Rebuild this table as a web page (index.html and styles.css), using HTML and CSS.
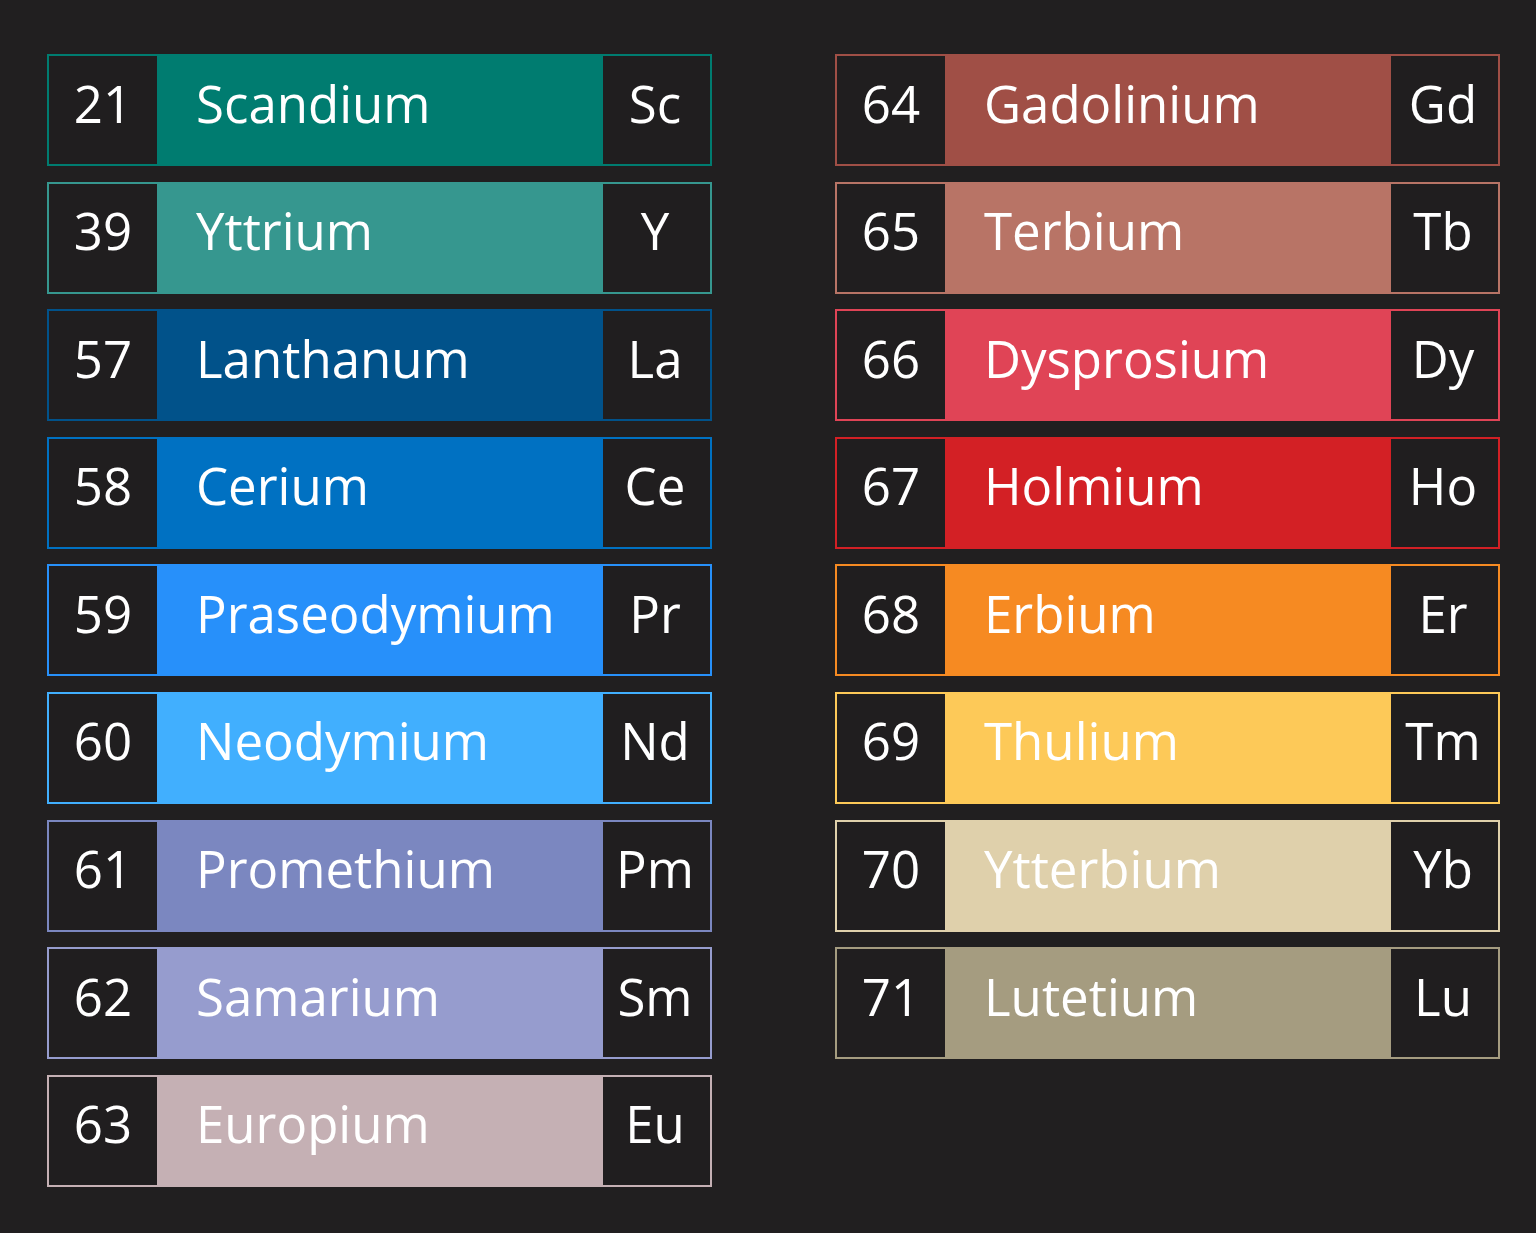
FILE: index.html
```html
<!DOCTYPE html>
<html lang="en">
<head>
<meta charset="utf-8">
<title>Lanthanides</title>
<link rel="stylesheet" href="styles.css">
</head>
<body>
<main class="board">
  <section class="column">
    <div class="card c-sc"><span class="num">21</span><span class="name">Scandium</span><span class="sym">Sc</span></div>
    <div class="card c-y"><span class="num">39</span><span class="name">Yttrium</span><span class="sym">Y</span></div>
    <div class="card c-la"><span class="num">57</span><span class="name">Lanthanum</span><span class="sym">La</span></div>
    <div class="card c-ce"><span class="num">58</span><span class="name">Cerium</span><span class="sym">Ce</span></div>
    <div class="card c-pr"><span class="num">59</span><span class="name">Praseodymium</span><span class="sym">Pr</span></div>
    <div class="card c-nd"><span class="num">60</span><span class="name">Neodymium</span><span class="sym">Nd</span></div>
    <div class="card c-pm"><span class="num">61</span><span class="name">Promethium</span><span class="sym">Pm</span></div>
    <div class="card c-sm"><span class="num">62</span><span class="name">Samarium</span><span class="sym">Sm</span></div>
    <div class="card c-eu"><span class="num">63</span><span class="name">Europium</span><span class="sym">Eu</span></div>
  </section>
  <section class="column">
    <div class="card c-gd"><span class="num">64</span><span class="name">Gadolinium</span><span class="sym">Gd</span></div>
    <div class="card c-tb"><span class="num">65</span><span class="name">Terbium</span><span class="sym">Tb</span></div>
    <div class="card c-dy"><span class="num">66</span><span class="name">Dysprosium</span><span class="sym">Dy</span></div>
    <div class="card c-ho"><span class="num">67</span><span class="name">Holmium</span><span class="sym">Ho</span></div>
    <div class="card c-er"><span class="num">68</span><span class="name">Erbium</span><span class="sym">Er</span></div>
    <div class="card c-tm"><span class="num">69</span><span class="name">Thulium</span><span class="sym">Tm</span></div>
    <div class="card c-yb"><span class="num">70</span><span class="name">Ytterbium</span><span class="sym">Yb</span></div>
    <div class="card c-lu"><span class="num">71</span><span class="name">Lutetium</span><span class="sym">Lu</span></div>
  </section>
</main>
</body>
</html>
```
FILE: styles.css
```css
html, body {
  margin: 0;
  padding: 0;
  background: #211f20;
}
body {
  width: 1536px;
  height: 1233px;
  overflow: hidden;
  font-family: "Open Sans", "Noto Sans", sans-serif;
  color: #ffffff;
}
.board {
  display: flex;
  gap: 123px;
  padding: 54px 0 0 47px;
}
.column {
  width: 665px;
  display: flex;
  flex-direction: column;
  gap: 15.6px;
}
.card {
  box-sizing: border-box;
  height: 112px;
  display: grid;
  grid-template-columns: 108px 1fr 107px;
  border: 2px solid var(--c);
  background: var(--c);
}
.num, .sym, .name {
  box-sizing: border-box;
  display: flex;
  align-items: center;
  font-size: 51px;
  line-height: 1;
  padding-bottom: 14px;
}
.num, .sym {
  background: #201e1f;
  justify-content: center;
}
.sym {
  padding-right: 3px;
}
.name {
  padding-left: 39px;
}
.c-sc { --c: #007c70; }
.c-y  { --c: #36978f; }
.c-la { --c: #01528a; }
.c-ce { --c: #0071c2; }
.c-pr { --c: #2790fa; }
.c-nd { --c: #41affe; }
.c-pm { --c: #7b87c0; }
.c-sm { --c: #969cce; }
.c-eu { --c: #c5b0b4; }
.c-gd { --c: #a04f46; }
.c-tb { --c: #b87466; }
.c-dy { --c: #e04456; }
.c-ho { --c: #d32025; }
.c-er { --c: #f68a22; }
.c-tm { --c: #fdc958; }
.c-yb { --c: #dfd0ab; }
.c-lu { --c: #a59c80; }
```
